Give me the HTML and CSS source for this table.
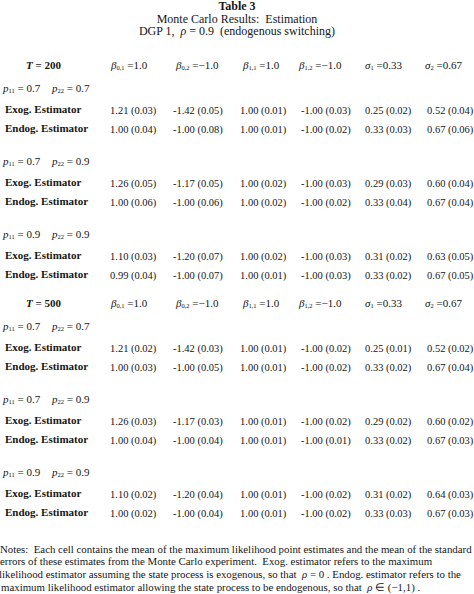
FILE: index.html
```html
<!DOCTYPE html>
<html>
<head>
<meta charset="utf-8">
<link rel="stylesheet" href="styles.css">
</head>
<body>
<div class="page">
  <div class="title">
    <div class="t1">Table 3</div>
    <div>Monte Carlo Results:&nbsp; Estimation</div>
    <div>DGP 1,&nbsp; <i>ρ</i> = 0.9&nbsp; (endogenous switching)</div>
  </div>

  <div class="section first">
    <div class="hdr">
      <div class="tlab"><i>T</i> = 200</div>
      <div><i>β</i><sub>0,1</sub> =1.0</div>
      <div><i>β</i><sub>0,2</sub> =−1.0</div>
      <div><i>β</i><sub>1,1</sub> =1.0</div>
      <div><i>β</i><sub>1,2</sub> =−1.0</div>
      <div><i>σ</i><sub>1</sub> =0.33</div>
      <div><i>σ</i><sub>2</sub> =0.67</div>
    </div>
    <div class="block">
      <div class="prow"><span class="pv"><i>p</i><sub>11</sub> = 0.7</span><span><i>p</i><sub>22</sub> = 0.7</span></div>
      <div class="row exog"><div class="lab">Exog. Estimator</div><div>1.21 (0.03)</div><div>-1.42 (0.05)</div><div>1.00 (0.01)</div><div>-1.00 (0.03)</div><div>0.25 (0.02)</div><div>0.52 (0.04)</div></div>
      <div class="row"><div class="lab">Endog. Estimator</div><div>1.00 (0.04)</div><div>-1.00 (0.08)</div><div>1.00 (0.01)</div><div>-1.00 (0.02)</div><div>0.33 (0.03)</div><div>0.67 (0.06)</div></div>
    </div>
    <div class="block">
      <div class="prow"><span class="pv"><i>p</i><sub>11</sub> = 0.7</span><span><i>p</i><sub>22</sub> = 0.9</span></div>
      <div class="row exog"><div class="lab">Exog. Estimator</div><div>1.26 (0.05)</div><div>-1.17 (0.05)</div><div>1.00 (0.02)</div><div>-1.00 (0.03)</div><div>0.29 (0.03)</div><div>0.60 (0.04)</div></div>
      <div class="row"><div class="lab">Endog. Estimator</div><div>1.00 (0.06)</div><div>-1.00 (0.06)</div><div>1.00 (0.02)</div><div>-1.00 (0.02)</div><div>0.33 (0.04)</div><div>0.67 (0.04)</div></div>
    </div>
    <div class="block">
      <div class="prow"><span class="pv"><i>p</i><sub>11</sub> = 0.9</span><span><i>p</i><sub>22</sub> = 0.9</span></div>
      <div class="row exog"><div class="lab">Exog. Estimator</div><div>1.10 (0.03)</div><div>-1.20 (0.07)</div><div>1.00 (0.02)</div><div>-1.00 (0.03)</div><div>0.31 (0.02)</div><div>0.63 (0.05)</div></div>
      <div class="row"><div class="lab">Endog. Estimator</div><div>0.99 (0.04)</div><div>-1.00 (0.07)</div><div>1.00 (0.01)</div><div>-1.00 (0.03)</div><div>0.33 (0.02)</div><div>0.67 (0.05)</div></div>
    </div>
  </div>

  <div class="section second">
    <div class="hdr">
      <div class="tlab"><i>T</i> = 500</div>
      <div><i>β</i><sub>0,1</sub> =1.0</div>
      <div><i>β</i><sub>0,2</sub> =−1.0</div>
      <div><i>β</i><sub>1,1</sub> =1.0</div>
      <div><i>β</i><sub>1,2</sub> =−1.0</div>
      <div><i>σ</i><sub>1</sub> =0.33</div>
      <div><i>σ</i><sub>2</sub> =0.67</div>
    </div>
    <div class="block">
      <div class="prow"><span class="pv"><i>p</i><sub>11</sub> = 0.7</span><span><i>p</i><sub>22</sub> = 0.7</span></div>
      <div class="row exog"><div class="lab">Exog. Estimator</div><div>1.21 (0.02)</div><div>-1.42 (0.03)</div><div>1.00 (0.01)</div><div>-1.00 (0.02)</div><div>0.25 (0.01)</div><div>0.52 (0.02)</div></div>
      <div class="row"><div class="lab">Endog. Estimator</div><div>1.00 (0.03)</div><div>-1.00 (0.05)</div><div>1.00 (0.01)</div><div>-1.00 (0.02)</div><div>0.33 (0.02)</div><div>0.67 (0.04)</div></div>
    </div>
    <div class="block">
      <div class="prow"><span class="pv"><i>p</i><sub>11</sub> = 0.7</span><span><i>p</i><sub>22</sub> = 0.9</span></div>
      <div class="row exog"><div class="lab">Exog. Estimator</div><div>1.26 (0.03)</div><div>-1.17 (0.03)</div><div>1.00 (0.01)</div><div>-1.00 (0.02)</div><div>0.29 (0.02)</div><div>0.60 (0.02)</div></div>
      <div class="row"><div class="lab">Endog. Estimator</div><div>1.00 (0.04)</div><div>-1.00 (0.04)</div><div>1.00 (0.01)</div><div>-1.00 (0.01)</div><div>0.33 (0.02)</div><div>0.67 (0.03)</div></div>
    </div>
    <div class="block">
      <div class="prow"><span class="pv"><i>p</i><sub>11</sub> = 0.9</span><span><i>p</i><sub>22</sub> = 0.9</span></div>
      <div class="row exog"><div class="lab">Exog. Estimator</div><div>1.10 (0.02)</div><div>-1.20 (0.04)</div><div>1.00 (0.01)</div><div>-1.00 (0.02)</div><div>0.31 (0.02)</div><div>0.64 (0.03)</div></div>
      <div class="row"><div class="lab">Endog. Estimator</div><div>1.00 (0.02)</div><div>-1.00 (0.04)</div><div>1.00 (0.01)</div><div>-1.00 (0.02)</div><div>0.33 (0.03)</div><div>0.67 (0.03)</div></div>
    </div>
  </div>

  <div class="notes">
    <div class="n1">Notes:&nbsp; Each cell contains the mean of the maximum likelihood point estimates and the mean of the standard</div>
    <div class="n2">errors of these estimates from the Monte Carlo experiment.&nbsp; Exog. estimator refers to the maximum</div>
    <div class="n3">likelihood estimator assuming the state process is exogenous, so that&nbsp; <i>ρ</i> = 0 . Endog. estimator refers to the</div>
    <div class="n4">maximum likelihood estimator allowing the state process to be endogenous, so that&nbsp; <i>ρ</i> ∈ (−1,1) .</div>
  </div>
</div>
</body>
</html>
```

FILE: styles.css
```css
html, body {
  margin: 0;
  padding: 0;
  overflow: hidden;
  background: #ffffff;
}
.page {
  width: 474px;
  height: 594px;
  overflow: hidden;
  font-family: "Liberation Serif", "Times New Roman", serif;
  color: #161616;
  white-space: nowrap;
}
.title {
  text-align: center;
  font-size: 12px;
  line-height: 12.5px;
  padding-top: 0;
}
.t1 {
  font-weight: bold;
}
sub {
  font-size: 6.5px;
  vertical-align: -1px;
  line-height: 0;
}
.section.first {
  margin-top: 18px;
}
.section.second {
  margin-top: 10px;
}
.hdr {
  display: grid;
  grid-template-columns: 111px 65px 67px 56px 66px 60px 60px;
  height: 19px;
  line-height: 19px;
  font-size: 11px;
  margin-bottom: 4px;
}
.tlab {
  font-weight: bold;
  padding-left: 26px;
  font-size: 11px;
}
.block + .block {
  margin-top: 14px;
}
.prow {
  display: flex;
  height: 19px;
  line-height: 19px;
  font-size: 11px;
  padding-left: 3px;
  margin-bottom: 2px;
}
.pv {
  width: 49px;
}
.row {
  display: grid;
  grid-template-columns: 110px 63px 67px 61px 64px 62px 60px;
  height: 19px;
  line-height: 19px;
  font-size: 10.5px;
}
.row > div {
  padding-top: 1px;
}
.row .lab {
  font-weight: bold;
  font-size: 11px;
  padding-left: 5px;
  padding-top: 0;
}
.notes {
  margin-top: 21px;
  font-size: 10.85px;
  line-height: 12.7px;
}
.n1 { margin-left: 0; }
.n2 { margin-left: 0; }
.n3 { margin-left: -1px; }
.n4 { margin-left: 1px; }
```
